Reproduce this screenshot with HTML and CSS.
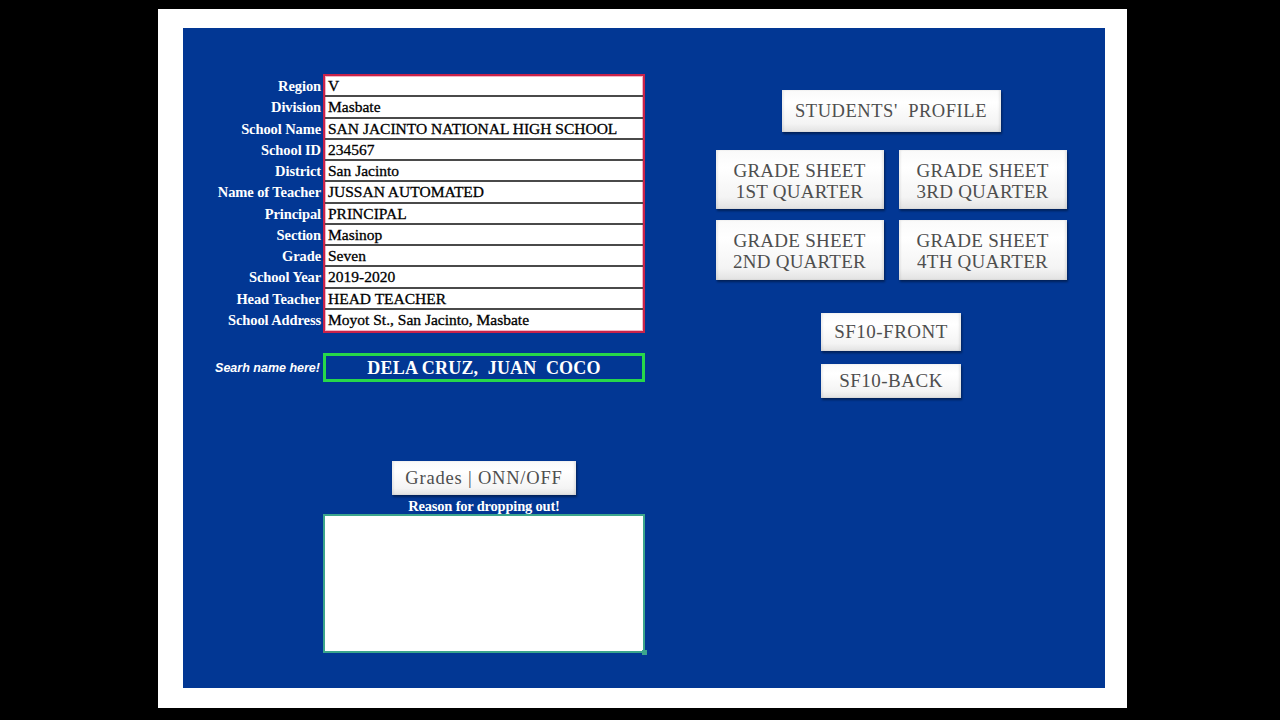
FILE: index.html
```html
<!DOCTYPE html>
<html>
<head>
<meta charset="utf-8">
<link rel="stylesheet" href="styles.css">
</head>
<body>
<div class="frame">
  <div class="panel">
    <section class="left">
      <div class="form">
        <div class="labels">
          <div class="lbl">Region</div>
          <div class="lbl">Division</div>
          <div class="lbl">School Name</div>
          <div class="lbl">School ID</div>
          <div class="lbl">District</div>
          <div class="lbl">Name of Teacher</div>
          <div class="lbl">Principal</div>
          <div class="lbl">Section</div>
          <div class="lbl">Grade</div>
          <div class="lbl">School Year</div>
          <div class="lbl">Head Teacher</div>
          <div class="lbl">School Address</div>
        </div>
        <div class="table">
          <div class="cell">V</div>
          <div class="cell">Masbate</div>
          <div class="cell">SAN JACINTO NATIONAL HIGH SCHOOL</div>
          <div class="cell">234567</div>
          <div class="cell">San Jacinto</div>
          <div class="cell">JUSSAN AUTOMATED</div>
          <div class="cell">PRINCIPAL</div>
          <div class="cell">Masinop</div>
          <div class="cell">Seven</div>
          <div class="cell">2019-2020</div>
          <div class="cell">HEAD TEACHER</div>
          <div class="cell">Moyot St., San Jacinto, Masbate</div>
        </div>
      </div>
      <div class="search">
        <div class="search-lbl">Searh name here!</div>
        <div class="search-box">DELA CRUZ,&nbsp; JUAN&nbsp; COCO</div>
      </div>
      <div class="reason">
        <div class="btn btn-grades">Grades | ONN/OFF</div>
        <div class="reason-lbl">Reason for dropping out!</div>
        <div class="reason-box"><span class="grip"></span></div>
      </div>
    </section>
    <section class="right">
      <div class="btn btn-profile">STUDENTS'&nbsp; PROFILE</div>
      <div class="grid">
        <div class="btn btn-sheet">GRADE SHEET<br>1ST QUARTER</div>
        <div class="btn btn-sheet">GRADE SHEET<br>3RD QUARTER</div>
        <div class="btn btn-sheet">GRADE SHEET<br>2ND QUARTER</div>
        <div class="btn btn-sheet">GRADE SHEET<br>4TH QUARTER</div>
      </div>
      <div class="btn btn-sf btn-front">SF10-FRONT</div>
      <div class="btn btn-sf btn-back">SF10-BACK</div>
    </section>
  </div>
</div>
</body>
</html>
```

FILE: styles.css
```css
html, body {
  margin: 0;
  padding: 0;
  background: #000;
  width: 1280px;
  height: 720px;
  overflow: hidden;
}

.frame {
  margin: 9px 0 0 158px;
  width: 969px;
  height: 699px;
  box-sizing: border-box;
  background: #fff;
  padding: 19px 22px 20px 25px;
}

.panel {
  width: 922px;
  height: 660px;
  background: #023794;
  display: flex;
  font-family: "Liberation Serif", "DejaVu Serif", serif;
}

.left {
  width: 462px;
  padding-top: 46px;
  display: flex;
  flex-direction: column;
}

.form {
  display: flex;
}

.labels {
  width: 138px;
  padding-top: 2px;
  margin-right: 2px;
}

.lbl {
  height: 21.25px;
  line-height: 21.25px;
  text-align: right;
  color: #fff;
  font-weight: bold;
  font-size: 14.5px;
  letter-spacing: -0.1px;
  white-space: nowrap;
}

.table {
  width: 322px;
  box-sizing: border-box;
  border: 2px solid #c9234a;
  box-shadow: inset 0 0 0 1px #f2b6c4;
  background: #fff;
}

.cell {
  height: 21.25px;
  box-sizing: border-box;
  border-bottom: 2px solid #4a4a4a;
  padding-left: 3px;
  font-size: 15.5px;
  line-height: 20px;
  color: #000;
  white-space: nowrap;
  -webkit-text-stroke: 0.3px #000;
}

.cell:last-child {
  border-bottom: none;
}

.search {
  display: flex;
  align-items: center;
  margin-top: 20px;
}

.search-lbl {
  width: 137px;
  margin-right: 3px;
  text-align: right;
  color: #fff;
  font-family: "Liberation Sans", Arial, sans-serif;
  font-style: italic;
  font-weight: bold;
  font-size: 12.5px;
}

.search-box {
  width: 322px;
  height: 29px;
  box-sizing: border-box;
  border: 3px solid #27d84a;
  color: #fff;
  font-weight: bold;
  font-size: 18px;
  text-align: center;
  line-height: 25px;
  letter-spacing: 0.2px;
}

.reason {
  margin-left: 140px;
  width: 322px;
  margin-top: 79px;
  display: flex;
  flex-direction: column;
  align-items: center;
}

.reason-lbl {
  color: #fff;
  font-weight: bold;
  font-size: 14.5px;
  line-height: 14px;
  margin-top: 4px;
  letter-spacing: -0.2px;
}

.reason-box {
  margin-top: 1px;
  width: 322px;
  height: 139px;
  box-sizing: border-box;
  border: 2px solid #3ca58c;
  background: #fff;
  position: relative;
}

.grip {
  position: absolute;
  right: -4px;
  bottom: -4px;
  width: 5px;
  height: 5px;
  background: #3ca58c;
}

.btn {
  box-sizing: border-box;
  background: linear-gradient(to bottom, #fafafa 0%, #ffffff 30%, #f4f4f4 80%, #e2e2e2 100%);
  box-shadow: inset 2px 0 2px rgba(0,0,0,0.06), inset -2px 0 2px rgba(0,0,0,0.08), 1px 2px 2px rgba(0,0,0,0.4);
  color: #4e4e4e;
  font-family: "Liberation Serif", "DejaVu Serif", serif;
  font-size: 18.5px;
  text-align: center;
  display: flex;
  align-items: center;
  justify-content: center;
  letter-spacing: 0.5px;
  white-space: nowrap;
}

.btn-grades {
  width: 184px;
  height: 34px;
  font-size: 18.5px;
  letter-spacing: 0.8px;
}

.right {
  margin-left: 70px;
  width: 352px;
  padding-top: 62px;
  display: flex;
  flex-direction: column;
  align-items: center;
}

.btn-profile {
  width: 219px;
  height: 42px;
  letter-spacing: 0.55px;
  padding-top: 1px;
}

.grid {
  margin-top: 18px;
  display: grid;
  grid-template-columns: 168px 168px;
  grid-template-rows: 59px 60px;
  column-gap: 15px;
  row-gap: 11px;
}

.btn-sheet {
  line-height: 21px;
  font-size: 19px;
  letter-spacing: 0.25px;
  padding-top: 2px;
}

.btn-sf {
  width: 140px;
  font-size: 19px;
}

.btn-front {
  margin-top: 33px;
  height: 38px;
}

.btn-back {
  margin-top: 13px;
  height: 34px;
}
```
